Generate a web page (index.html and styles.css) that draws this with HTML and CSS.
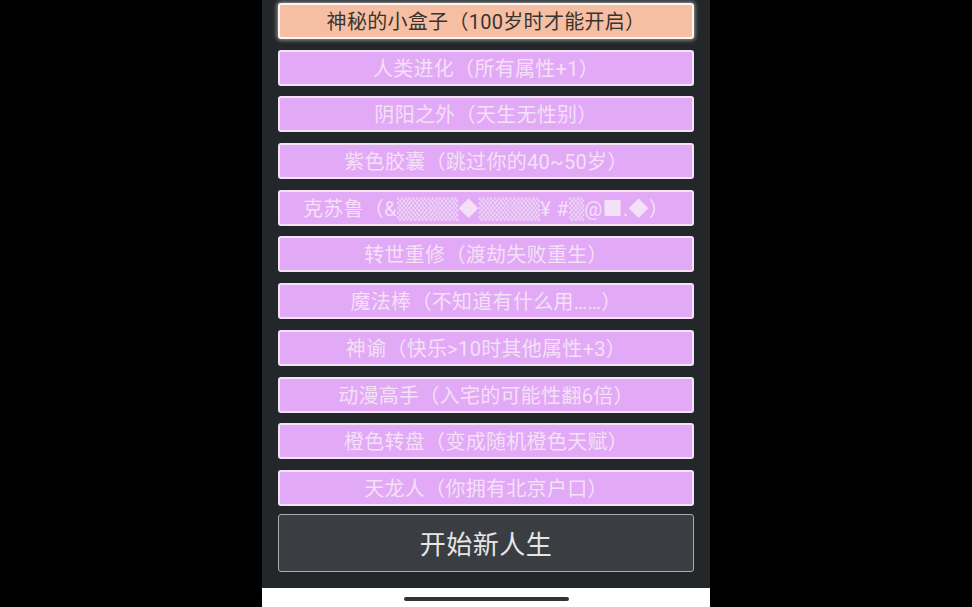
FILE: index.html
```html
<!DOCTYPE html>
<html lang="zh">
<head>
<meta charset="utf-8">
<link rel="stylesheet" href="styles.css">
</head>
<body>
<div class="screen">
  <div class="panel">
    <div class="list">
      <div class="talent orange">神秘的小盒子（100岁时才能开启）</div>
      <div class="talent">人类进化（所有属性+1）</div>
      <div class="talent">阴阳之外（天生无性别）</div>
      <div class="talent">紫色胶囊（跳过你的40~50岁）</div>
      <div class="talent">克苏鲁（&amp;<span class="shade">▒▒▒▒</span>◆<span class="shade">▒▒▒▒</span>¥ #<span class="shade">▒</span>@■.◆）</div>
      <div class="talent">转世重修（渡劫失败重生）</div>
      <div class="talent">魔法棒（不知道有什么用……）</div>
      <div class="talent">神谕（快乐&gt;10时其他属性+3）</div>
      <div class="talent">动漫高手（入宅的可能性翻6倍）</div>
      <div class="talent">橙色转盘（变成随机橙色天赋）</div>
      <div class="talent">天龙人（你拥有北京户口）</div>
    </div>
    <div class="start">开始新人生</div>
  </div>
  <div class="navbar"><div class="indicator"></div></div>
</div>
</body>
</html>
```
FILE: styles.css
```css
html, body {
  margin: 0;
  padding: 0;
  background: #000;
  width: 972px;
  height: 607px;
  overflow: hidden;
  font-family: Roboto, "Noto Sans CJK SC", "Noto Sans", sans-serif;
}
.screen {
  width: 448px;
  height: 607px;
  margin-left: 262px;
  display: flex;
  flex-direction: column;
}
.panel {
  background: #23272a;
  height: 588px;
  padding: 3px 16px 0 16px;
  box-sizing: border-box;
  display: flex;
  flex-direction: column;
}
.list {
  display: flex;
  flex-direction: column;
  gap: 10.7px;
}
.talent {
  height: 36px;
  box-sizing: border-box;
  background: #e2a9f6;
  border: 2px solid #f3e1f6;
  border-radius: 3px;
  color: #f4e0f7;
  font-size: 20px;
  line-height: 34px;
  text-align: center;
  white-space: nowrap;
  letter-spacing: 0.3px;
}
.talent.orange {
  background: #f6bfa4;
  border-color: #fff4ee;
  color: #3a3430;
  box-shadow: 0 0 4px 1px rgba(255, 255, 255, 0.55);
}
.shade {
  font-family: "DejaVu Sans", sans-serif;
  color: #ecd6f3;
  letter-spacing: 0;
}
.start {
  margin-top: 8px;
  height: 58px;
  box-sizing: border-box;
  background: #3a3d41;
  border: 1.5px solid #a9abad;
  border-radius: 3px;
  color: #e6e6e6;
  font-size: 26px;
  line-height: 60px;
  text-align: center;
  letter-spacing: 0.5px;
}
.navbar {
  flex: 1;
  background: #fff;
  display: flex;
  justify-content: center;
  padding-top: 9px;
  box-sizing: border-box;
}
.indicator {
  width: 165px;
  height: 4px;
  border-radius: 2px;
  background: #333;
}
```
